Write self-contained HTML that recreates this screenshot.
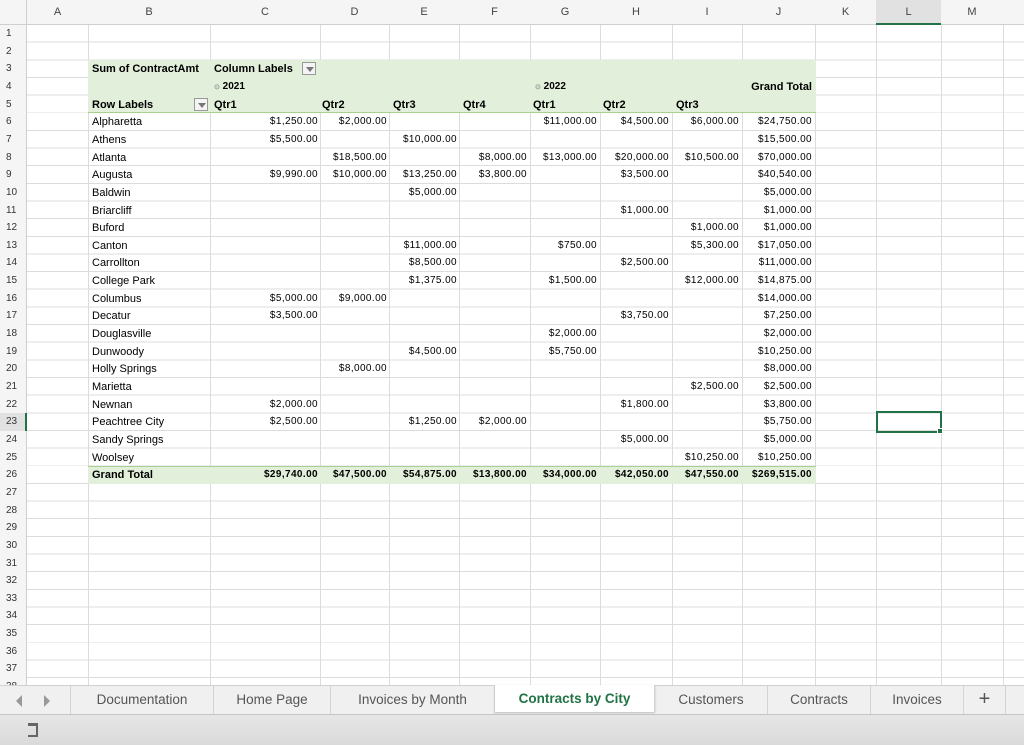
<!DOCTYPE html>
<html><head><meta charset="utf-8"><style>
*{margin:0;padding:0;box-sizing:border-box}
body{width:1024px;height:745px;overflow:hidden;background:#fff;font-family:"Liberation Sans",Arial,sans-serif;position:relative}
.hl{position:absolute;left:0;width:1024px;top:25px;height:660px;background:repeating-linear-gradient(to bottom,transparent 0,transparent 16.65px,#dcdcdc 16.65px,#dcdcdc 17.65px)}
.vl{position:absolute;top:0;width:1px;height:685px;background:#dcdcdc}
.colhdr{position:absolute;top:0;left:0;width:1024px;height:25px;background:#f5f5f5;border-bottom:1px solid #cfcfcf}
.ch{position:absolute;top:0;height:25px;line-height:25px;text-align:center;font-size:11px;color:#444}
.rowhdr{position:absolute;top:25px;left:0;width:27px;height:660px;background:#f5f5f5;border-right:1px solid #cfcfcf}
.rn{position:absolute;left:0;width:22px;text-align:left;padding-left:6px;font-size:10px;color:#333;height:17.65px;line-height:18px}
.g{position:absolute;background:#e2efda}
.r{position:absolute;left:0;width:1024px;height:17.65px;line-height:18px;font-size:11px;color:#000}
.r span{position:absolute;white-space:nowrap}
.n{font-size:10px;text-align:right;letter-spacing:0.4px}
.b{font-weight:bold}
.cB{left:92px}
.C{right:706px}.D{right:637px}.E{right:567px}.F{right:497px}.G{right:427px}.H{right:355px}.I{right:285px}.J{right:212px}
.dd{position:absolute;width:14px;height:13px;border:1px solid #999;background:#f4f4f4}
.dd:after{content:"";position:absolute;left:3px;top:4px;border-left:4px solid transparent;border-right:4px solid transparent;border-top:5px solid #777}
.tabbar{position:absolute;left:0;top:685px;width:1024px;height:30px;background:#f0f0f0;border-top:1px solid #d0d0d0}
.tab{position:absolute;top:0;height:28px;line-height:27px;font-size:13.5px;color:#555;text-align:center;border-right:1px solid #d4d4d4}
.status{position:absolute;left:0;top:714px;width:1024px;height:31px;background:linear-gradient(#e6e6e6,#dadada);border-top:1px solid #c4c4c4}
</style></head><body>
<div class="hl"></div>
<div class="vl" style="left:88px"></div><div class="vl" style="left:210px"></div><div class="vl" style="left:320px"></div><div class="vl" style="left:389px"></div><div class="vl" style="left:459px"></div><div class="vl" style="left:530px"></div><div class="vl" style="left:600px"></div><div class="vl" style="left:672px"></div><div class="vl" style="left:742px"></div><div class="vl" style="left:815px"></div><div class="vl" style="left:876px"></div><div class="vl" style="left:941px"></div><div class="vl" style="left:1003px"></div>

<div class="colhdr">
<div class="ch" style="left:27px;width:61px">A</div><div class="ch" style="left:88px;width:122px">B</div><div class="ch" style="left:210px;width:110px">C</div><div class="ch" style="left:320px;width:69px">D</div><div class="ch" style="left:389px;width:70px">E</div><div class="ch" style="left:459px;width:71px">F</div><div class="ch" style="left:530px;width:70px">G</div><div class="ch" style="left:600px;width:72px">H</div><div class="ch" style="left:672px;width:70px">I</div><div class="ch" style="left:742px;width:73px">J</div><div class="ch" style="left:815px;width:61px">K</div><div class="ch" style="left:876px;width:65px;background:#e1e1e1;border-bottom:2px solid #217346;height:25px">L</div><div class="ch" style="left:941px;width:62px">M</div>
<div style="position:absolute;left:0;top:0;width:27px;height:25px;border-right:1px solid #cfcfcf"></div>
</div>
<div class="rowhdr">
<div class="rn" style="top:0">1</div><div class="rn" style="top:17.65px">2</div><div class="rn" style="top:35.3px">3</div><div class="rn" style="top:52.95px">4</div><div class="rn" style="top:70.6px">5</div><div class="rn" style="top:88.25px">6</div><div class="rn" style="top:105.9px">7</div><div class="rn" style="top:123.55px">8</div><div class="rn" style="top:141.2px">9</div><div class="rn" style="top:158.85px">10</div><div class="rn" style="top:176.5px">11</div><div class="rn" style="top:194.15px">12</div><div class="rn" style="top:211.8px">13</div><div class="rn" style="top:229.45px">14</div><div class="rn" style="top:247.1px">15</div><div class="rn" style="top:264.75px">16</div><div class="rn" style="top:282.4px">17</div><div class="rn" style="top:300.05px">18</div><div class="rn" style="top:317.7px">19</div><div class="rn" style="top:335.35px">20</div><div class="rn" style="top:353px">21</div><div class="rn" style="top:370.65px">22</div><div class="rn" style="top:388.3px;background:#e1e1e1;border-right:2px solid #217346;width:27px">23</div><div class="rn" style="top:405.95px">24</div><div class="rn" style="top:423.6px">25</div><div class="rn" style="top:441.25px">26</div><div class="rn" style="top:458.9px">27</div><div class="rn" style="top:476.55px">28</div><div class="rn" style="top:494.2px">29</div><div class="rn" style="top:511.85px">30</div><div class="rn" style="top:529.5px">31</div><div class="rn" style="top:547.15px">32</div><div class="rn" style="top:564.8px">33</div><div class="rn" style="top:582.45px">34</div><div class="rn" style="top:600.1px">35</div><div class="rn" style="top:617.75px">36</div><div class="rn" style="top:635.4px">37</div><div class="rn" style="top:653.05px">38</div>
</div>

<div class="g" style="left:88px;top:60.3px;width:728px;height:53px;border-bottom:1px solid #a9d08e"></div>
<div class="g" style="left:88px;top:466.25px;width:728px;height:17.65px;border-top:1px solid #a9d08e"></div>

<div class="r b" style="top:60.3px"><span class="cB">Sum of ContractAmt</span><span style="left:214px">Column Labels</span></div>
<div class="dd" style="left:302px;top:62px"></div>
<div class="r b" style="top:77.95px;font-size:10px"><span style="left:214px"><span style="position:static;color:#999;font-size:7px">⊙</span> 2021</span><span style="left:535px"><span style="position:static;color:#999;font-size:7px">⊙</span> 2022</span><span style="right:212px;font-size:11px">Grand Total</span></div>
<div class="r b" style="top:95.6px"><span class="cB">Row Labels</span><span style="left:214px">Qtr1</span><span style="left:322px">Qtr2</span><span style="left:393px">Qtr3</span><span style="left:463px">Qtr4</span><span style="left:533px">Qtr1</span><span style="left:603px">Qtr2</span><span style="left:676px">Qtr3</span></div>
<div class="dd" style="left:194px;top:98px"></div>

<div class="r" style="top:113.25px"><span class="cB">Alpharetta</span><span class="n C">$1,250.00</span><span class="n D">$2,000.00</span><span class="n G">$11,000.00</span><span class="n H">$4,500.00</span><span class="n I">$6,000.00</span><span class="n J">$24,750.00</span></div>
<div class="r" style="top:130.9px"><span class="cB">Athens</span><span class="n C">$5,500.00</span><span class="n E">$10,000.00</span><span class="n J">$15,500.00</span></div>
<div class="r" style="top:148.55px"><span class="cB">Atlanta</span><span class="n D">$18,500.00</span><span class="n F">$8,000.00</span><span class="n G">$13,000.00</span><span class="n H">$20,000.00</span><span class="n I">$10,500.00</span><span class="n J">$70,000.00</span></div>
<div class="r" style="top:166.2px"><span class="cB">Augusta</span><span class="n C">$9,990.00</span><span class="n D">$10,000.00</span><span class="n E">$13,250.00</span><span class="n F">$3,800.00</span><span class="n H">$3,500.00</span><span class="n J">$40,540.00</span></div>
<div class="r" style="top:183.85px"><span class="cB">Baldwin</span><span class="n E">$5,000.00</span><span class="n J">$5,000.00</span></div>
<div class="r" style="top:201.5px"><span class="cB">Briarcliff</span><span class="n H">$1,000.00</span><span class="n J">$1,000.00</span></div>
<div class="r" style="top:219.15px"><span class="cB">Buford</span><span class="n I">$1,000.00</span><span class="n J">$1,000.00</span></div>
<div class="r" style="top:236.8px"><span class="cB">Canton</span><span class="n E">$11,000.00</span><span class="n G">$750.00</span><span class="n I">$5,300.00</span><span class="n J">$17,050.00</span></div>
<div class="r" style="top:254.45px"><span class="cB">Carrollton</span><span class="n E">$8,500.00</span><span class="n H">$2,500.00</span><span class="n J">$11,000.00</span></div>
<div class="r" style="top:272.1px"><span class="cB">College Park</span><span class="n E">$1,375.00</span><span class="n G">$1,500.00</span><span class="n I">$12,000.00</span><span class="n J">$14,875.00</span></div>
<div class="r" style="top:289.75px"><span class="cB">Columbus</span><span class="n C">$5,000.00</span><span class="n D">$9,000.00</span><span class="n J">$14,000.00</span></div>
<div class="r" style="top:307.4px"><span class="cB">Decatur</span><span class="n C">$3,500.00</span><span class="n H">$3,750.00</span><span class="n J">$7,250.00</span></div>
<div class="r" style="top:325.05px"><span class="cB">Douglasville</span><span class="n G">$2,000.00</span><span class="n J">$2,000.00</span></div>
<div class="r" style="top:342.7px"><span class="cB">Dunwoody</span><span class="n E">$4,500.00</span><span class="n G">$5,750.00</span><span class="n J">$10,250.00</span></div>
<div class="r" style="top:360.35px"><span class="cB">Holly Springs</span><span class="n D">$8,000.00</span><span class="n J">$8,000.00</span></div>
<div class="r" style="top:378px"><span class="cB">Marietta</span><span class="n I">$2,500.00</span><span class="n J">$2,500.00</span></div>
<div class="r" style="top:395.65px"><span class="cB">Newnan</span><span class="n C">$2,000.00</span><span class="n H">$1,800.00</span><span class="n J">$3,800.00</span></div>
<div class="r" style="top:413.3px"><span class="cB">Peachtree City</span><span class="n C">$2,500.00</span><span class="n E">$1,250.00</span><span class="n F">$2,000.00</span><span class="n J">$5,750.00</span></div>
<div class="r" style="top:430.95px"><span class="cB">Sandy Springs</span><span class="n H">$5,000.00</span><span class="n J">$5,000.00</span></div>
<div class="r" style="top:448.6px"><span class="cB">Woolsey</span><span class="n I">$10,250.00</span><span class="n J">$10,250.00</span></div>
<div class="r b" style="top:466.25px"><span class="cB">Grand Total</span><span class="n C">$29,740.00</span><span class="n D">$47,500.00</span><span class="n E">$54,875.00</span><span class="n F">$13,800.00</span><span class="n G">$34,000.00</span><span class="n H">$42,050.00</span><span class="n I">$47,550.00</span><span class="n J">$269,515.00</span></div>

<div style="position:absolute;left:876px;top:411px;width:66px;height:22px;border:2px solid #217346"></div>
<div style="position:absolute;left:937px;top:428px;width:6px;height:6px;background:#217346;border:1px solid #fff"></div>

<div class="tabbar">
<div style="position:absolute;left:16px;top:9px;border-right:6px solid #999;border-top:6px solid transparent;border-bottom:6px solid transparent"></div>
<div style="position:absolute;left:44px;top:9px;border-left:6px solid #999;border-top:6px solid transparent;border-bottom:6px solid transparent"></div>
<div class="tab" style="left:70px;width:144px;border-left:1px solid #d4d4d4">Documentation</div>
<div class="tab" style="left:214px;width:117px">Home Page</div>
<div class="tab" style="left:331px;width:164px">Invoices by Month</div>
<div class="tab" style="left:495px;width:160px;background:#fff;color:#217346;font-weight:bold;height:27px;top:-1px;box-shadow:0 1px 2px #bbb">Contracts by City</div>
<div class="tab" style="left:655px;width:113px">Customers</div>
<div class="tab" style="left:768px;width:103px">Contracts</div>
<div class="tab" style="left:871px;width:93px">Invoices</div>
<div class="tab" style="left:964px;width:42px;font-size:20px;color:#555">+</div>
</div>
<div class="status">
<div style="position:absolute;left:28px;top:8px;width:10px;height:14px;border:2px solid #666;border-top-width:3px;border-left:none"></div>
</div>
</body></html>
